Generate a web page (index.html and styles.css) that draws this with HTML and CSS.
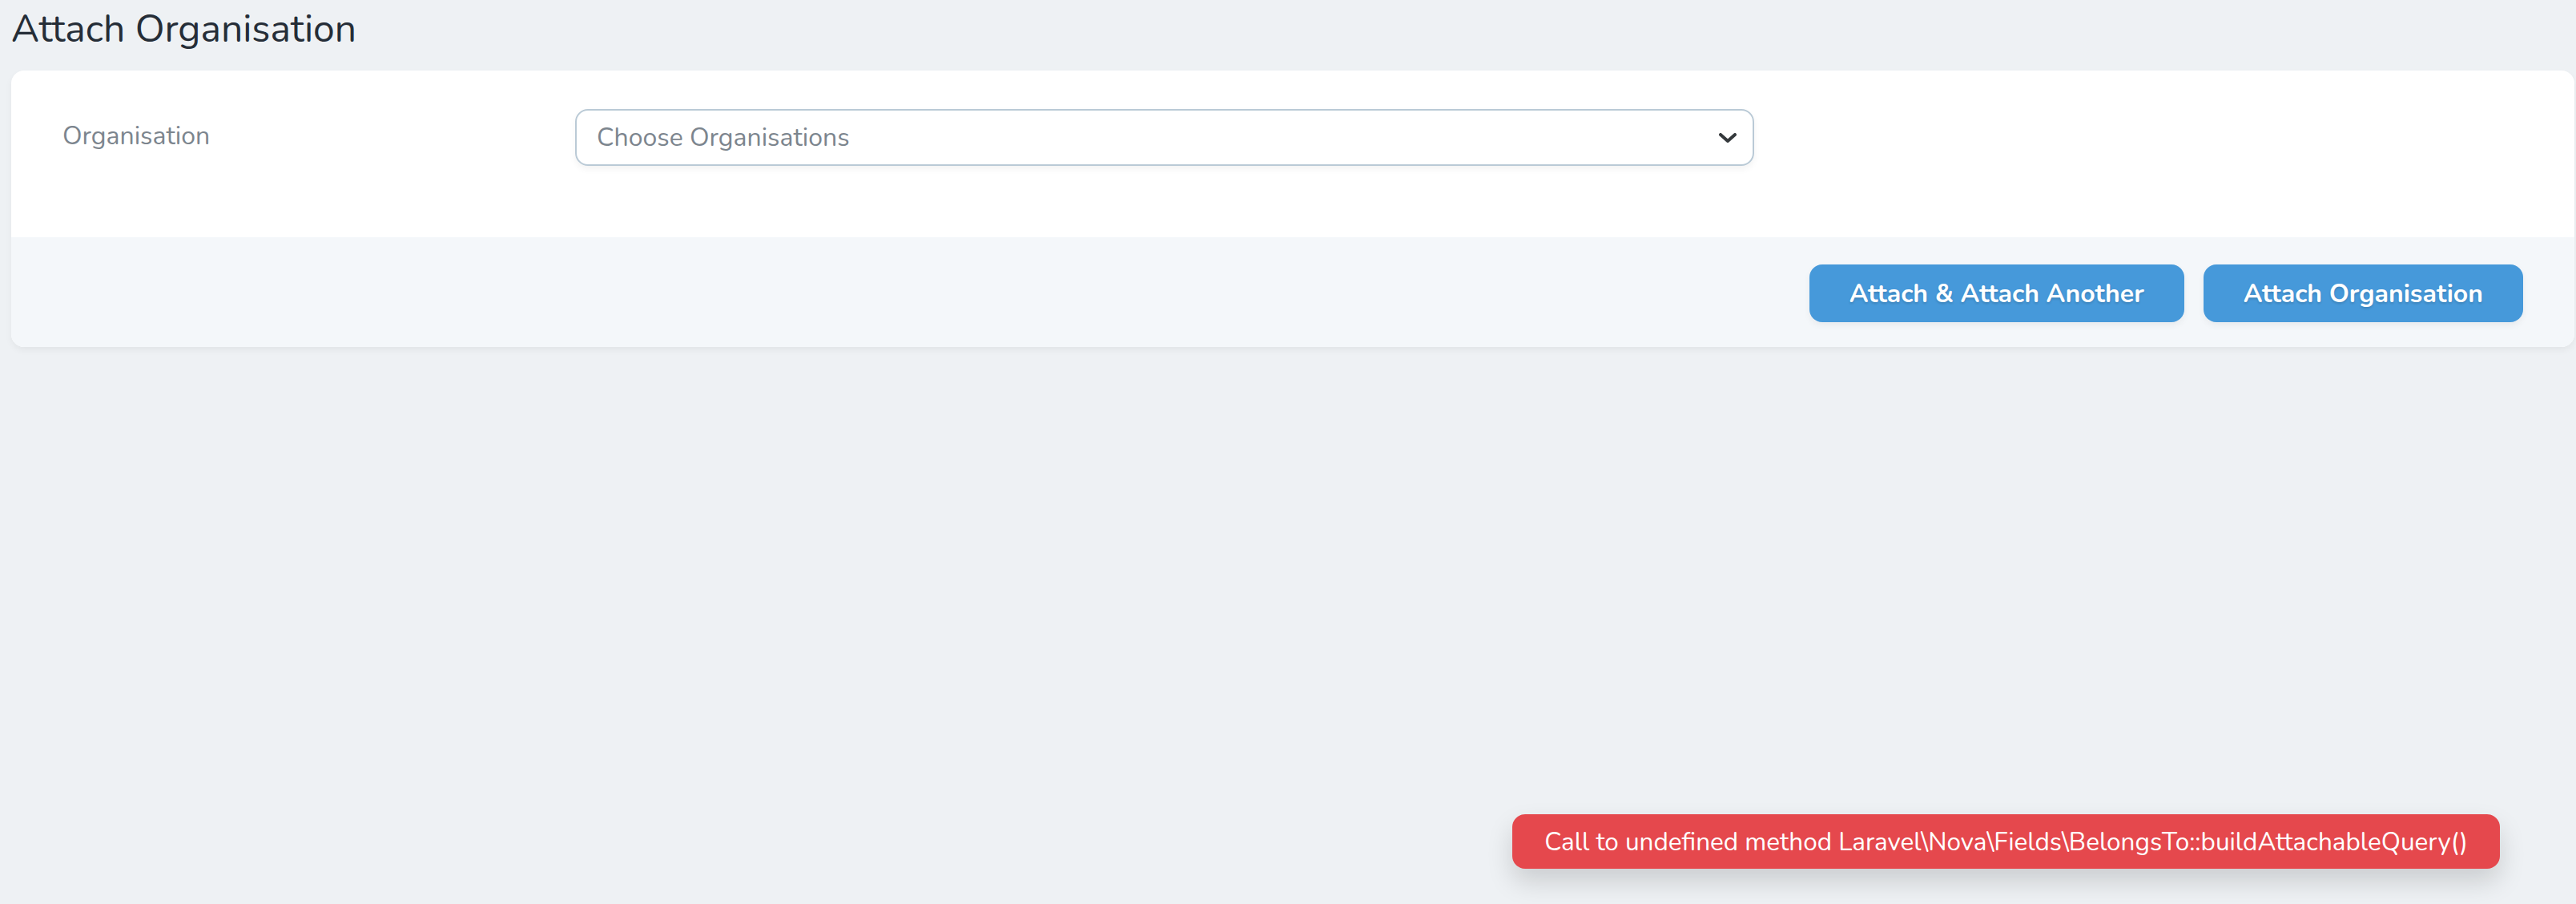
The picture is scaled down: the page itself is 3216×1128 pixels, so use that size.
FILE: index.html
```html
<!DOCTYPE html>
<html lang="en">
<head>
<meta charset="utf-8">
<title>Attach Organisation</title>
<link rel="stylesheet" href="styles.css">
</head>
<body>
<div class="page">
  <h1 class="title">Attach Organisation</h1>
  <div class="card">
    <div class="field-row">
      <div class="field-label">Organisation</div>
      <div class="field-control">
        <div class="select">
          <span class="placeholder">Choose Organisations</span>
          <svg class="chevron" viewBox="0 0 22 12" width="22" height="12"><path d="M2 2 L11 10 L20 2" fill="none" stroke="#35393c" stroke-width="4" stroke-linecap="round" stroke-linejoin="round"/></svg>
        </div>
      </div>
    </div>
    <div class="card-footer">
      <button class="btn">Attach &amp; Attach Another</button>
      <button class="btn">Attach Organisation</button>
    </div>
  </div>
</div>
<div class="toast">Call to undefined method Laravel\Nova\Fields\BelongsTo::buildAttachableQuery()</div>
</body>
</html>
```
FILE: styles.css
```css
html, body {
  margin: 0;
  padding: 0;
  background: #eef1f4;
  font-family: "Nunito", Lato, "Open Sans", sans-serif;
  height: 100%;
}
.page {
  padding: 0 2px 0 14px;
}
.title {
  margin: 0;
  padding-top: 4px;
  height: 88px;
  box-sizing: border-box;
  font-size: 48px;
  font-weight: 400;
  line-height: 64px;
  color: #252d37;
}
.card {
  background: #fff;
  border-radius: 16px;
  box-shadow: 0 4px 8px rgba(0, 0, 0, 0.05);
  overflow: hidden;
}
.field-row {
  display: flex;
  height: 208px;
  box-sizing: border-box;
  padding-top: 48px;
}
.field-label {
  width: 20%;
  box-sizing: border-box;
  padding: 10px 64px 0;
  font-size: 32px;
  line-height: 48px;
  color: #7c858e;
}
.field-control {
  width: 50%;
  box-sizing: border-box;
  padding: 0 64px;
}
.select {
  height: 71px;
  box-sizing: border-box;
  border: 2px solid #bacad6;
  border-radius: 16px;
  box-shadow: 0 4px 8px rgba(0, 0, 0, 0.05);
  display: flex;
  align-items: center;
  justify-content: space-between;
  padding: 0 20px 0 25px;
}
.placeholder {
  font-size: 32px;
  color: #7c858e;
}
.chevron {
  display: block;
}
.card-footer {
  background: #f4f7fa;
  display: flex;
  justify-content: flex-end;
  gap: 24px;
  padding: 34px 64px 31px;
}
.btn {
  height: 72px;
  padding: 0 50px;
  border: 0;
  border-radius: 16px;
  background: #4699da;
  color: #fff;
  font-family: inherit;
  font-size: 32px;
  font-weight: 700;
  text-shadow: 0 2px 3px rgba(0, 0, 0, 0.15);
  box-shadow: 0 4px 8px rgba(0, 0, 0, 0.05);
}
.toast {
  position: absolute;
  right: 95px;
  bottom: 44px;
  height: 68px;
  box-sizing: border-box;
  padding: 0 40px;
  display: flex;
  align-items: center;
  background: #e5484d;
  color: #fff;
  border-radius: 16px;
  font-size: 31.5px;
  font-weight: 400;
  box-shadow: 0 16px 32px rgba(0, 0, 0, 0.15);
}
```
